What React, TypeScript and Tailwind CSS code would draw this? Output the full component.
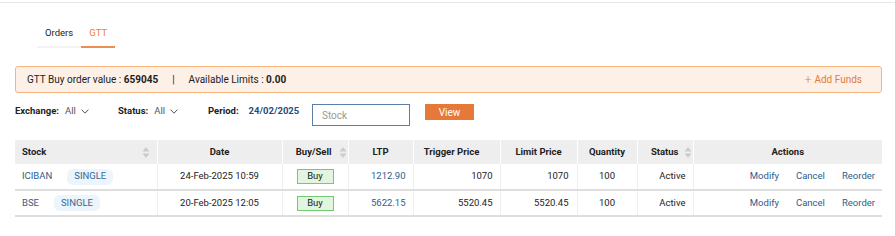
import React from 'react';

interface GttRow {
  stock: string;
  date: string;
  ltp: string;
  trigger: string;
  limit: string;
  qty: string;
  status: string;
}

const rows: GttRow[] = [
  { stock: 'ICIBAN', date: '24-Feb-2025 10:59', ltp: '1212.90', trigger: '1070', limit: '1070', qty: '100', status: 'Active' },
  { stock: 'BSE', date: '20-Feb-2025 12:05', ltp: '5622.15', trigger: '5520.45', limit: '5520.45', qty: '100', status: 'Active' },
];

const SortIcon = () => (
  <svg width="8" height="13" viewBox="0 0 8 13" className="shrink-0">
    <path d="M4 1 L7.5 5.5 H0.5 Z" fill="#cccccc" />
    <path d="M4 12 L7.5 7.5 H0.5 Z" fill="#cccccc" />
  </svg>
);

const Chevron = () => (
  <svg width="8" height="5" viewBox="0 0 8 5" className="ml-[5px]">
    <path d="M0.6 0.6 L4 4.2 L7.4 0.6" fill="none" stroke="#555" strokeWidth="1" />
  </svg>
);

const App: React.FC = () => {
  return (
    <div
      className="w-[895px] h-[236px] bg-white overflow-hidden"
      style={{ fontFamily: 'Roboto, "Liberation Sans", sans-serif' }}
    >
      <div className="mt-[2px] border-t border-[#e8e8e8] pl-[15px] pr-[13px]">
        {/* Tabs */}
        <div className="flex pl-[22px] pt-[18px]">
          <div className="h-[27px] px-[8px] flex items-center text-[9.5px] text-[#222] border-b-2 border-[#f3f3f3]">
            Orders
          </div>
          <div className="h-[27px] px-[8px] flex items-center text-[9.5px] text-[#e8803f] border-b-2 border-[#ec8d51]">
            GTT
          </div>
        </div>

        {/* Banner */}
        <div className="mt-[18px] h-[27px] flex items-center justify-between px-[11px] bg-[#fdf0e6] border border-[#f6b47f] rounded-[3px] text-[10px] text-[#222]">
          <div className="flex items-center">
            <span>GTT Buy order value :&nbsp;</span>
            <span className="font-bold">659045</span>
            <span className="mx-[14px]">|</span>
            <span>Available Limits :&nbsp;</span>
            <span className="font-bold">0.00</span>
          </div>
          <div className="text-[#e07b3c] pr-[8px] flex items-center">
            <span className="text-[12px] leading-none mr-[3px] font-light">+</span>
            <span>Add Funds</span>
          </div>
        </div>

        {/* Filters */}
        <div className="mt-[11px] flex items-start text-[9.5px] text-[#222]">
          <div className="w-[103px] flex items-center h-[14px]">
            <span className="font-bold">Exchange:</span>
            <span className="ml-[6px] text-[#555]">All</span>
            <Chevron />
          </div>
          <div className="w-[90px] flex items-center h-[14px]">
            <span className="font-bold">Status:</span>
            <span className="ml-[6px] text-[#555]">All</span>
            <Chevron />
          </div>
          <div className="w-[104px] flex items-center h-[14px]">
            <span className="font-bold">Period:</span>
            <span className="ml-[10px] font-bold text-[#1f4e80]">24/02/2025</span>
          </div>
          <div className="w-[98px] h-[22px] border border-[#5a7ea6] flex items-center px-[9px] text-[10px] text-[#999]">
            Stock
          </div>
          <div className="ml-[15px] w-[49px] h-[16px] bg-[#e6793a] text-white text-[10px] flex items-center justify-center">
            View
          </div>
        </div>

        {/* Table */}
        <table className="mt-[14px] w-[867px] table-fixed border-collapse text-[9.5px] text-[#222]">
          <colgroup>
            <col className="w-[142px]" />
            <col className="w-[125px]" />
            <col className="w-[66px]" />
            <col className="w-[65px]" />
            <col className="w-[87px]" />
            <col className="w-[77px]" />
            <col className="w-[60px]" />
            <col className="w-[56px]" />
            <col className="w-[189px]" />
          </colgroup>
          <thead>
            <tr className="h-[24px] bg-[#eeeeee] text-[9.5px] font-bold">
              <th className="border-r border-white px-[7px] text-left">
                <div className="flex items-center justify-between">
                  <span>Stock</span>
                  <SortIcon />
                </div>
              </th>
              <th className="border-r border-white text-center">Date</th>
              <th className="border-r border-white pr-[1px]">
                <div className="flex items-center justify-end gap-[7px]">
                  <span>Buy/Sell</span>
                  <SortIcon />
                </div>
              </th>
              <th className="border-r border-white text-center">LTP</th>
              <th className="border-r border-white text-center pr-[10px]">Trigger Price</th>
              <th className="border-r border-white text-center">Limit Price</th>
              <th className="border-r border-white text-center">Quantity</th>
              <th className="border-r border-white pr-[1px]">
                <div className="flex items-center justify-end gap-[5px]">
                  <span>Status</span>
                  <SortIcon />
                </div>
              </th>
              <th className="text-center">Actions</th>
            </tr>
          </thead>
          <tbody>
            {rows.map((r) => (
              <tr key={r.stock} className="h-[26px] border-b-2 border-[#dedede]">
                <td className="border-r border-[#efefef] px-[7px]">
                  <div className="flex items-center">
                    <span className="text-[#2e5d8c]">{r.stock}</span>
                    <span className="ml-[15px] h-[16px] px-[7px] rounded-[6px] bg-[#ecf4fc] text-[#3c6791] text-[9.5px] flex items-center">
                      SINGLE
                    </span>
                  </div>
                </td>
                <td className="border-r border-[#efefef] text-center">{r.date}</td>
                <td className="border-r border-[#efefef]">
                  <div className="flex justify-center">
                    <span className="w-[37px] h-[15px] border border-[#74c974] bg-[#e0f6de] flex items-center justify-center">
                      Buy
                    </span>
                  </div>
                </td>
                <td className="border-r border-[#efefef] text-right pr-[7px] text-[#2e5d8c]">{r.ltp}</td>
                <td className="border-r border-[#efefef] text-right pr-[7px]">{r.trigger}</td>
                <td className="border-r border-[#efefef] text-right pr-[8px]">{r.limit}</td>
                <td className="border-r border-[#efefef] text-center">{r.qty}</td>
                <td className="border-r border-[#efefef] text-right pr-[7px]">{r.status}</td>
                <td className="pr-[7px]">
                  <div className="flex justify-end gap-[17px] text-[#2e5d8c]">
                    <span>Modify</span>
                    <span>Cancel</span>
                    <span>Reorder</span>
                  </div>
                </td>
              </tr>
            ))}
          </tbody>
        </table>
      </div>
    </div>
  );
};

export default App;
